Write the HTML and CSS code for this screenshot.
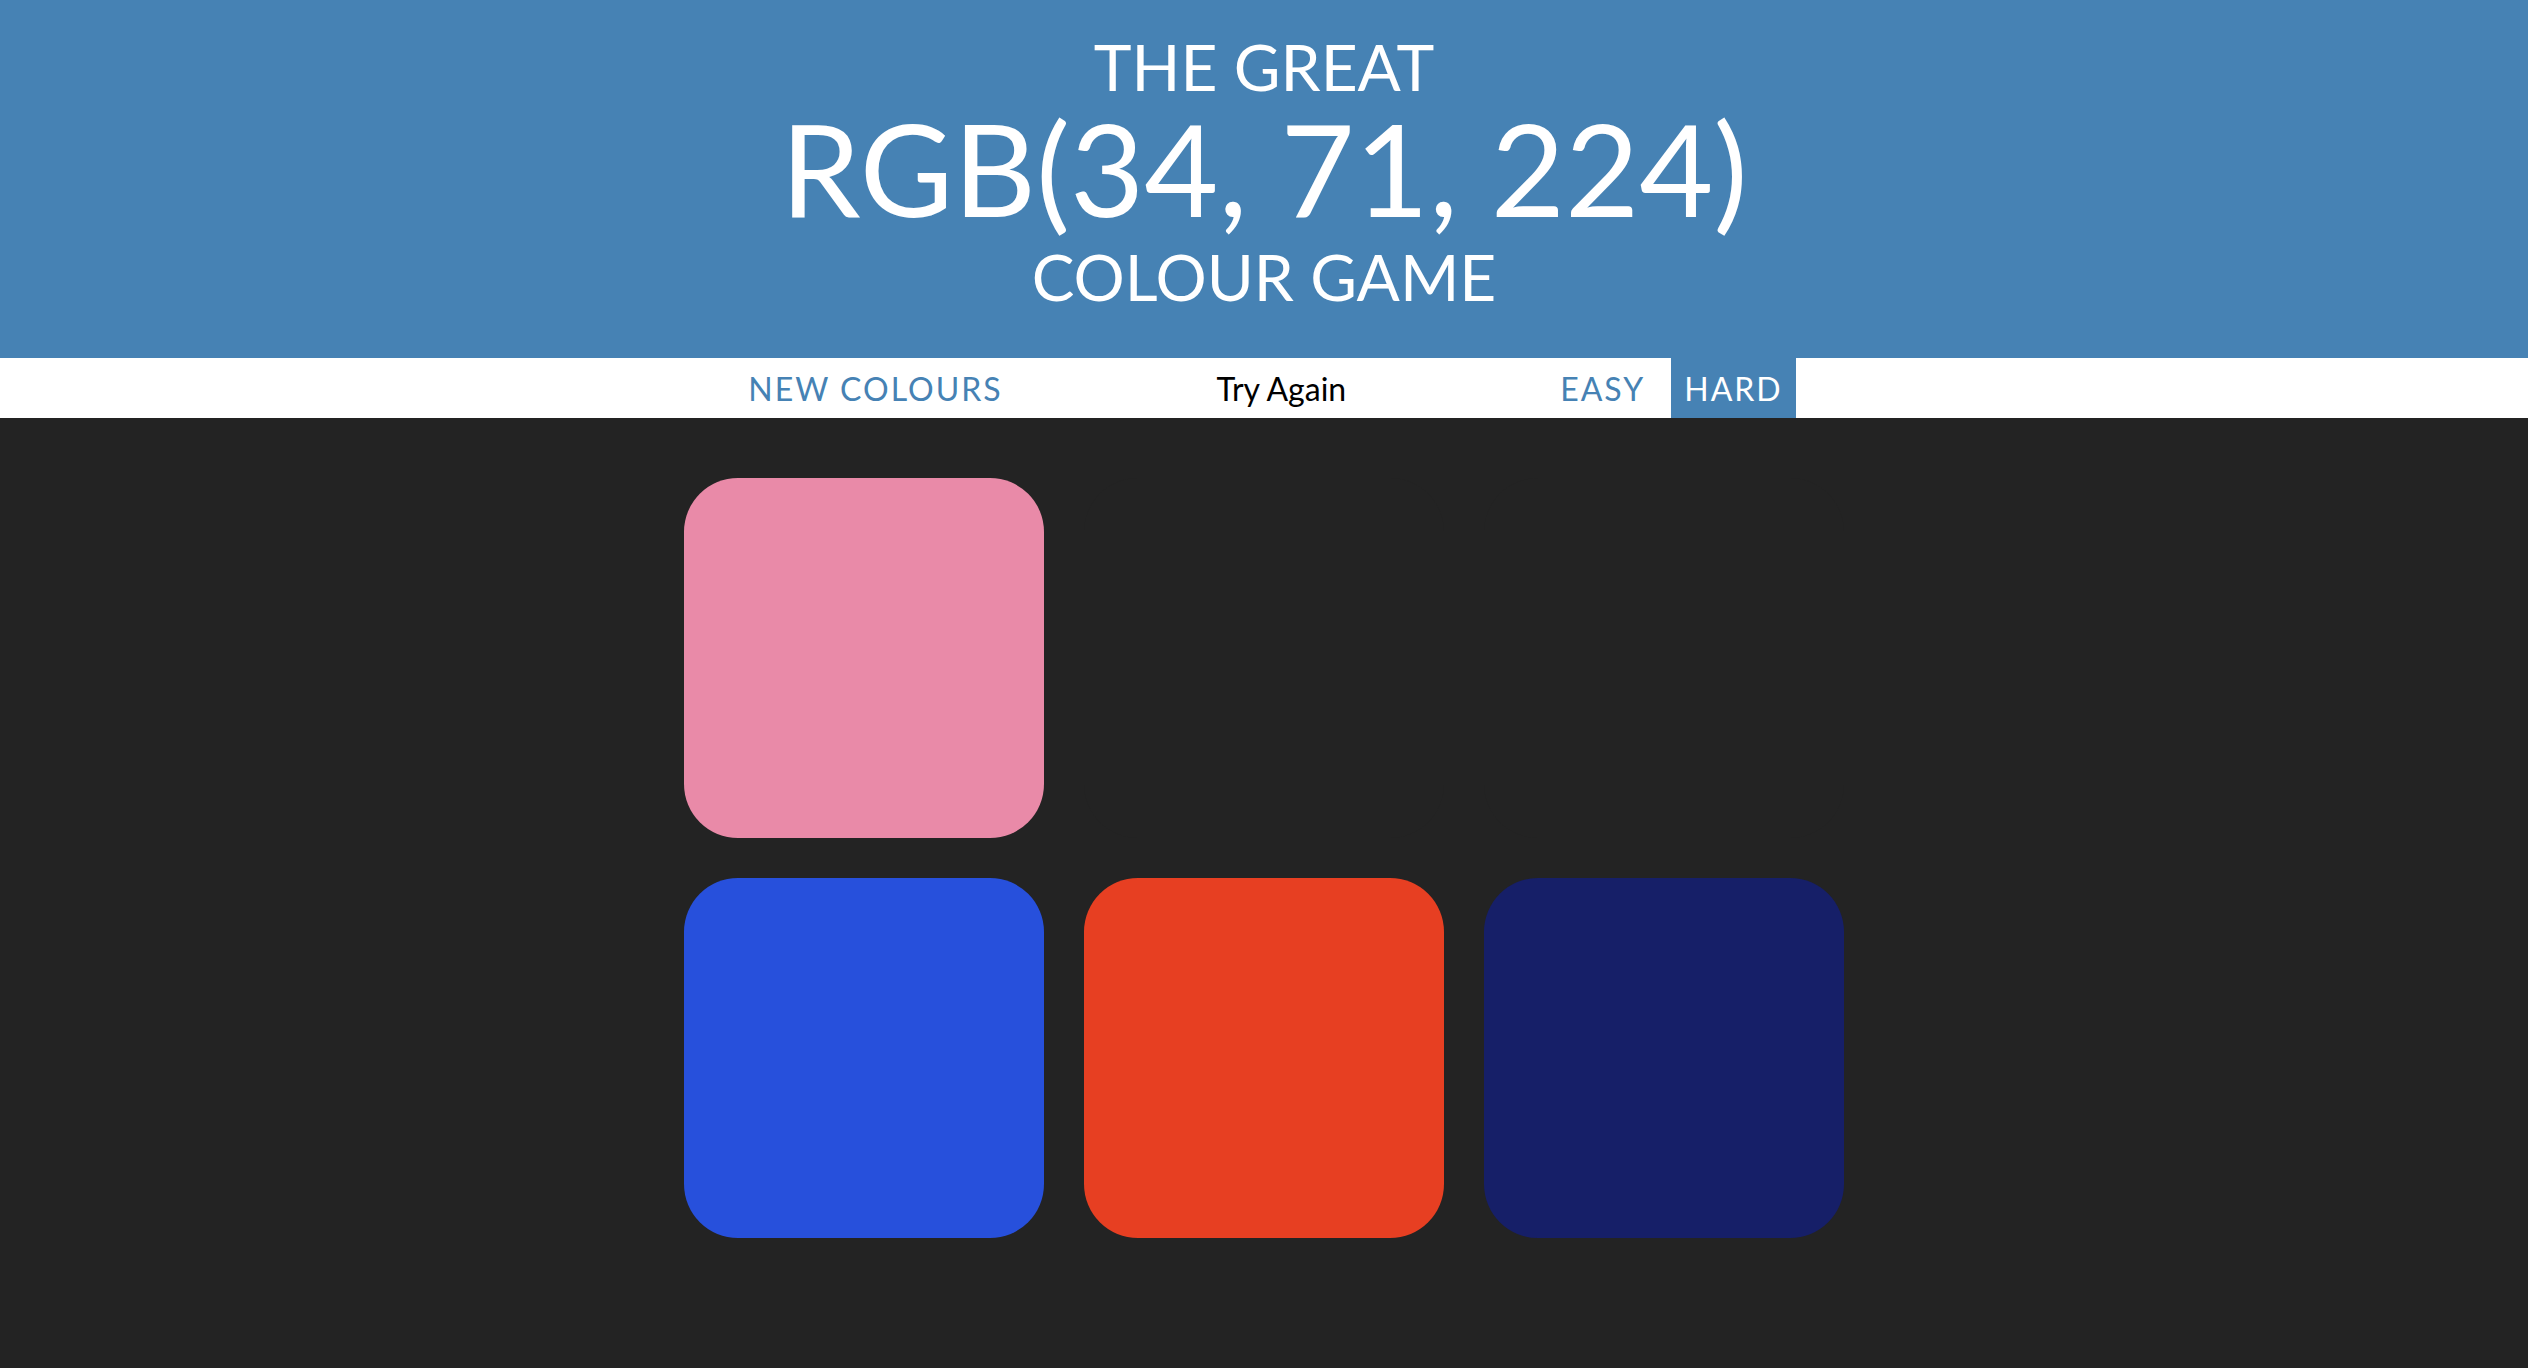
FILE: index.html
```
<!DOCTYPE html>
<html lang="en">
<head>
  <meta charset="UTF-8" />
  <meta name="viewport" content="width=device-width, initial-scale=1.0"/>
  <title>Colour Game</title>
  <link rel="stylesheet" href="styles.css">
</head>
<body>

<h1>
  <span class="title-line">The Great</span>
  <span id="colorDisplay">RGB(34, 71, 224)</span>
  <span class="title-line last">Colour Game</span>
</h1>

<div id="stripe">
  <button id="reset">New Colours</button>
  <span id="message">Try Again</span>
  <button class="mode">Easy</button>
  <button class="mode selected">Hard</button>
</div>

<div id="container">
  <div class="square" style="background: rgb(233, 138, 168);"></div>
  <div class="square faded"></div>
  <div class="square faded"></div>
  <div class="square" style="background: rgb(39, 80, 220);"></div>
  <div class="square" style="background: rgb(231, 63, 34);"></div>
  <div class="square" style="background: rgb(22, 31, 104);"></div>
</div>

</body>
</html>
```

FILE: styles.css
```
* { box-sizing: border-box; }

body {
  margin: 0;
  background: #232323;
  font-family: Lato, "Open Sans", sans-serif;
}

h1 {
  margin: 0;
  padding: 32px 0 38px;
  background: steelblue;
  color: #fff;
  font-size: 64px;
  font-weight: normal;
  text-align: center;
  text-transform: uppercase;
}

h1 span {
  display: block;
}

.title-line {
  line-height: 70px;
}

.title-line.last {
  line-height: 86px;
}

#colorDisplay {
  font-size: 128px;
  line-height: 132px;
}

#stripe {
  display: flex;
  justify-content: center;
  align-items: stretch;
  gap: 10px;
  height: 60px;
  background: #fff;
}

button {
  border: none;
  background: none;
  padding: 0 16px;
  height: 100%;
  font-family: inherit;
  font-size: 32px;
  font-weight: normal;
  letter-spacing: 2px;
  text-transform: uppercase;
  color: steelblue;
  outline: none;
  cursor: pointer;
  transition: all 0.3s;
}

button:hover,
.selected {
  background: steelblue;
  color: #fff;
}

.selected {
  padding: 0 13px;
}

#message {
  display: flex;
  align-items: center;
  justify-content: center;
  width: 20%;
  font-size: 32px;
  color: #000;
}

#container {
  display: grid;
  grid-template-columns: repeat(3, 1fr);
  gap: 40px;
  width: 1200px;
  margin: 40px auto;
  padding: 20px;
}

.square {
  aspect-ratio: 1;
  border-radius: 15%;
  transition: background 0.6s;
}

.faded {
  background: #232323;
}
```
